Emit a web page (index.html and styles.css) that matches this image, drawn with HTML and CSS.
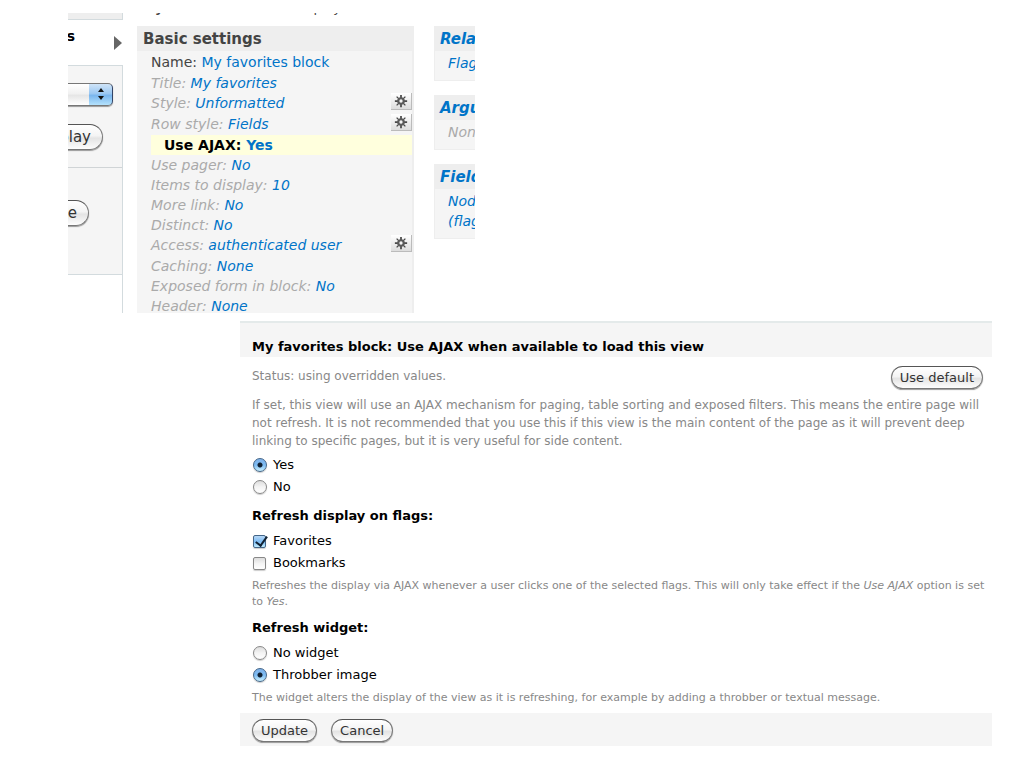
FILE: index.html
```
<!DOCTYPE html>
<html lang="en">
<head>
    <meta charset="UTF-8">
    <title>Views: My favorites block</title>
    <link rel="stylesheet" href="styles.css">
</head>
<body>
<svg class="sprite" aria-hidden="true">
    <symbol id="gear" viewBox="0 0 16 16">
        <g stroke="#4a4a4a" stroke-width="2">
            <path d="M8 1v14M1 8h14"/>
            <path d="M3 3l10 10M13 3L3 13" stroke-width="1.6"/>
        </g>
        <circle cx="8" cy="8" r="4.4" fill="#5a5a5a"/>
        <circle cx="8" cy="8" r="1.9" fill="#f4f4f4"/>
    </symbol>
</svg>

<div class="views-edit">
    <div class="tabs">
        <div class="tab-stub"></div>
        <div class="tab-active">
            <strong>Defaults</strong>
            <svg class="tab-arrow" viewBox="0 0 8 14"><path d="M0 0l8 7-8 7z" fill="#666"/></svg>
        </div>
        <div class="tab-panel">
            <div class="tab-group add-display">
                <div class="mac-select">
                    <select aria-label="Display type"><option>Page</option></select>
                    <svg viewBox="0 0 8 12"><path d="M4 0l3 4H1zM4 12l3-4H1z" fill="#111"/></svg>
                </div>
                <button type="button" class="btn btn-large">Add display</button>
            </div>
            <div class="tab-group analyze">
                <button type="button" class="btn btn-large">Analyze</button>
            </div>
        </div>
    </div>

    <div class="display">
        <div class="display-title"><strong>My favorites block</strong> <span>Display the view as a block.</span></div>
        <div class="columns">
            <div class="category">
                <h2>Basic settings</h2>
                <ul class="settings">
                    <li class="defined">Name: <a href="#">My favorites block</a></li>
                    <li>Title: <a href="#">My favorites</a></li>
                    <li class="has-gear"><span>Style: <a href="#">Unformatted</a></span><button type="button" class="gear" aria-label="Style settings"><svg><use href="#gear"/></svg></button></li>
                    <li class="has-gear"><span>Row style: <a href="#">Fields</a></span><button type="button" class="gear" aria-label="Row style settings"><svg><use href="#gear"/></svg></button></li>
                    <li class="changed">Use AJAX: <a href="#">Yes</a></li>
                    <li>Use pager: <a href="#">No</a></li>
                    <li>Items to display: <a href="#">10</a></li>
                    <li>More link: <a href="#">No</a></li>
                    <li>Distinct: <a href="#">No</a></li>
                    <li class="has-gear"><span>Access: <a href="#">authenticated user</a></span><button type="button" class="gear" aria-label="Access settings"><svg><use href="#gear"/></svg></button></li>
                    <li>Caching: <a href="#">None</a></li>
                    <li>Exposed form in block: <a href="#">No</a></li>
                    <li>Header: <a href="#">None</a></li>
                </ul>
            </div>
            <div class="side">
                <div class="category">
                    <h2><a href="#">Relationships</a></h2>
                    <ul><li><a href="#">Flags: favorites</a></li></ul>
                </div>
                <div class="category">
                    <h2><a href="#">Arguments</a></h2>
                    <ul><li>None defined</li></ul>
                </div>
                <div class="category">
                    <h2><a href="#">Fields</a></h2>
                    <ul>
                        <li><a href="#">Node: Title</a></li>
                        <li><a href="#">(flagged) Title</a></li>
                    </ul>
                </div>
            </div>
        </div>
    </div>
</div>

<form class="views-form">
    <h3 class="form-title">My favorites block: Use AJAX when available to load this view</h3>
    <div class="form-body">
        <div class="status">
            <span>Status: using overridden values.</span>
            <button type="button" class="btn">Use default</button>
        </div>
        <p class="help">If set, this view will use an AJAX mechanism for paging, table sorting and exposed filters. This means the entire page will not refresh. It is not recommended that you use this if this view is the main content of the page as it will prevent deep linking to specific pages, but it is very useful for side content.</p>
        <div class="options">
            <label><input type="radio" name="use_ajax" checked> Yes</label>
            <label><input type="radio" name="use_ajax"> No</label>
        </div>
        <h4>Refresh display on flags:</h4>
        <div class="options">
            <label><input type="checkbox" checked> Favorites</label>
            <label><input type="checkbox"> Bookmarks</label>
        </div>
        <p class="description">Refreshes the display via AJAX whenever a user clicks one of the selected flags. This will only take effect if the <em>Use AJAX</em> option is set to <em>Yes</em>.</p>
        <h4>Refresh widget:</h4>
        <div class="options">
            <label><input type="radio" name="widget"> No widget</label>
            <label><input type="radio" name="widget" checked> Throbber image</label>
        </div>
        <p class="description">The widget alters the display of the view as it is refreshing, for example by adding a throbber or textual message.</p>
    </div>
    <div class="form-buttons">
        <button type="button" class="btn">Update</button>
        <button type="button" class="btn">Cancel</button>
    </div>
</form>
</body>
</html>
```
FILE: styles.css
```
* {
    box-sizing: border-box;
}

body {
    margin: 0;
    padding: 13px 32px 0 68px;
    background: #fff;
    color: #000;
    font: 13px/20px Verdana, "DejaVu Sans", sans-serif;
}

h2, h3, h4, p, ul {
    margin: 0;
    padding: 0;
}

ul {
    list-style: none;
}

a {
    color: #0074c8;
    text-decoration: none;
}

.sprite {
    display: none;
}

/* buttons */
.btn {
    height: 23px;
    flex-shrink: 0;
    padding: 0 8px;
    border: 1px solid #777;
    border-top-color: #555;
    border-radius: 12px;
    background: linear-gradient(#fff, #f4f4f4 45%, #e4e4e4 55%, #fdfdfd);
    box-shadow: 0 1px 1px #999;
    color: #333;
    font: 13px/20px Verdana, "DejaVu Sans", sans-serif;
    white-space: nowrap;
}

.btn-large {
    height: 26px;
    padding: 0 11px;
    border-radius: 13px;
    font-size: 15px;
}

/* view editor */
.views-edit {
    display: flex;
    gap: 14px;
    max-width: 407px;
    height: 300px;
    overflow: hidden;
    font-size: 14px;
}

.tabs {
    display: flex;
    flex-direction: column;
    flex: 0 0 55px;
    overflow: hidden;
}

.tabs::after {
    content: "";
    flex: 1;
    border-right: 1px solid #d3dbde;
}

.tab-stub {
    height: 7px;
    border: solid #d3dbde;
    border-width: 0 1px 1px 0;
    background: #eee;
}

.tab-active {
    display: flex;
    justify-content: flex-end;
    gap: 39px;
    height: 45px;
    padding: 6px 1px 0 0;
}

.tab-arrow {
    flex: none;
    width: 8px;
    height: 14px;
    margin-top: 10px;
}

.tab-panel {
    border: solid #d3dbde;
    border-width: 1px 1px 1px 0;
    background: #f5f5f5;
}

.tab-group {
    display: flex;
    flex-direction: column;
    align-items: flex-end;
}

.add-display {
    gap: 18px;
    padding: 17px 9px 17px 0;
    border-bottom: 1px solid #d0d4d6;
}

.add-display .btn {
    margin-right: 10px;
}

.analyze {
    padding: 32px 33px 48px 0;
}

.mac-select {
    position: relative;
}

.mac-select select {
    appearance: none;
    display: block;
    width: 90px;
    height: 23px;
    border: 1px solid #777;
    border-right-color: #346;
    border-radius: 5px;
    background: linear-gradient(#cfe4f8, #9cc8f2 45%, #7ab6ee 55%, #b4e2fc) right / 23px 100% no-repeat,
        linear-gradient(#fff, #f1f1f1 45%, #e6e6e6 55%, #fff);
    box-shadow: 0 1px 1px #999;
}

.mac-select svg {
    position: absolute;
    top: 5px;
    right: 8px;
    width: 8px;
    height: 12px;
    pointer-events: none;
}

.display {
    flex: 1;
    min-width: 0;
}

.display-title {
    display: flex;
    align-items: flex-end;
    gap: 16px;
    height: 3px;
    margin-bottom: 10px;
    padding-left: 5px;
    overflow: hidden;
    color: #444;
    font-size: 13px;
    line-height: 16px;
    white-space: nowrap;
}

.columns {
    display: flex;
    align-items: flex-start;
    gap: 20px;
}

.category {
    flex: 0 0 277px;
    background: #f5f5f5;
    border-right: 2px solid #eee;
    color: #aaa;
    font-style: italic;
    white-space: nowrap;
}

.category h2 {
    padding: 1px 6px 0;
    background: #eee;
    color: #444;
    font-size: 15px;
    font-style: normal;
    line-height: 24px;
}

.settings {
    padding: 1px 0 10px 14px;
}

.settings .defined {
    color: #444;
    font-style: normal;
    line-height: 21px;
}

.settings .changed {
    padding-left: 13px;
    background: #ffd;
    color: #000;
    font-style: normal;
    font-weight: bold;
}

.has-gear {
    display: flex;
    justify-content: space-between;
    line-height: 21px;
}

.gear {
    display: flex;
    align-items: center;
    justify-content: center;
    width: 21px;
    height: 17px;
    padding: 0;
    border: solid #bbb;
    border-width: 0 1px 1px 0;
    background: linear-gradient(#fff, #ddd);
}

.gear svg {
    width: 14px;
    height: 14px;
}

.side {
    display: flex;
    flex-direction: column;
    gap: 14px;
    flex: 1;
    min-width: 0;
}

.side .category {
    flex: none;
    overflow: hidden;
    border-right: 0;
    border-bottom: 1px solid #eee;
    border-left: 1px solid #eee;
}

.side h2 {
    padding-left: 5px;
    font-style: italic;
}

.side ul {
    padding: 2px 0 7px 13px;
}

/* settings form */
.views-form {
    margin: 8px 0 0 172px;
    border-top: 2px solid #e4eaea;
}

.form-title {
    padding: 14px 12px 0;
    background: #f5f5f5;
    font-size: 13px;
}

.form-body {
    padding: 9px 0 7px 12px;
}

.status {
    display: flex;
    justify-content: space-between;
    align-items: flex-start;
    padding-right: 9px;
    color: #888;
    font-size: 12px;
}

.help {
    margin-top: 7px;
    color: #888;
    font-size: 12px;
    line-height: 18px;
}

.options {
    margin-top: 4px;
}

.options label {
    display: flex;
    align-items: center;
    gap: 6px;
    height: 22px;
}

.options input {
    appearance: none;
    flex: none;
    width: 14px;
    height: 14px;
    margin: 0 0 0 1px;
    border: 1px solid #888;
    border-radius: 50%;
    background: linear-gradient(#ddd, #f4f4f4 50%, #fff);
    box-shadow: 0 1px 1px #ccc;
}

.options input[type="radio"]:checked {
    border-color: #468;
    background: radial-gradient(circle, #123 0 2px, transparent 3px),
        linear-gradient(#7fb2ea, #7dbcf4 50%, #c8f0ff);
}

.options input[type="checkbox"] {
    position: relative;
    width: 13px;
    height: 13px;
    margin: 0 1px;
    border-radius: 2px;
}

.options input[type="checkbox"]:checked {
    border-color: #468;
    background: linear-gradient(#b8d8f6, #7dbcf4 50%, #c0ecff);
}

.options input[type="checkbox"]:checked::after {
    content: "";
    position: absolute;
    top: -2px;
    left: 4px;
    width: 5px;
    height: 10px;
    border: solid #123;
    border-width: 0 2px 2px 0;
    transform: rotate(36deg);
}

.form-body h4 {
    margin-top: 8px;
    font-size: 13px;
}

.description {
    margin-top: 4px;
    color: #888;
    font-size: 11px;
    line-height: 16px;
}

.form-buttons {
    display: flex;
    gap: 14px;
    padding: 6px 12px 4px;
    background: #f5f5f5;
}
```
